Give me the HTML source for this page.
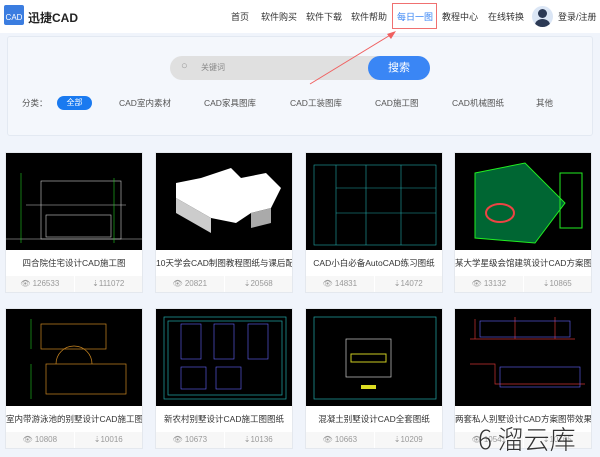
<!DOCTYPE html><html><head><meta charset="utf-8"><style>
*{margin:0;padding:0;box-sizing:border-box}
body{width:600px;height:456px;overflow:hidden;background:#f0f4fb;font-family:"Liberation Sans","Noto Sans CJK SC",sans-serif;position:relative;color:#333}
.hdr{position:absolute;left:0;top:0;width:600px;height:33px;background:#fff}
.logo{position:absolute;left:4px;top:5px;width:20px;height:20px;background:#3b7de0;border-radius:2px;color:#fff;font-size:8px;line-height:26px;text-align:center}
.brand{position:absolute;left:28px;top:9px;font-size:12px;font-weight:bold;color:#222}
.nav{position:absolute;top:10px;font-size:9px;color:#333}
.panel{position:absolute;left:7px;top:36px;width:586px;height:100px;background:#f4f7fc;border:1px solid #e3e9f2;border-radius:3px}
.search{position:absolute;left:170px;top:56px;width:260px;height:24px;background:#e0e0e0;border-radius:12px}
.btn{position:absolute;left:368px;top:56px;width:62px;height:24px;background:#3a86f5;border-radius:12px;color:#fff;font-size:11px;text-align:center;line-height:24px}
.cat{position:absolute;top:97px;font-size:8.5px;color:#555}
.card{position:absolute;width:138px;background:#fff;border:1px solid #e4e8ee}
.img{height:97px;background:#000;position:relative;overflow:hidden}
.t{height:26px;font-size:8.5px;text-align:center;line-height:26px;color:#333;white-space:nowrap;overflow:hidden}
.s{height:16px;background:#f7f7f7;display:flex;font-size:8px;color:#999;line-height:16px}
.s div{flex:1;text-align:center}.s div:first-child{border-right:1px solid #fff}
</style></head><body>
<div class="hdr"></div>
<div class="logo">CAD</div><div class="brand">迅捷CAD</div>
<div class="nav" style="left:231px">首页</div>
<div class="nav" style="left:261px">软件购买</div>
<div class="nav" style="left:306px">软件下载</div>
<div class="nav" style="left:351px">软件帮助</div>
<div class="nav" style="left:397px;color:#3a86f5">每日一图</div>
<div style="position:absolute;left:392px;top:3px;width:45px;height:26px;border:1px solid #f07070"></div>
<div class="nav" style="left:442px">教程中心</div>
<div class="nav" style="left:488px">在线转换</div>
<div style="position:absolute;left:532px;top:6px;width:21px;height:21px;border-radius:50%;background:#dbe6f5;overflow:hidden"><div style="position:absolute;left:6px;top:3px;width:9px;height:9px;border-radius:50%;background:#2c3a55"></div><div style="position:absolute;left:3px;top:13px;width:15px;height:12px;border-radius:50%;background:#2c3a55"></div></div>
<div class="nav" style="left:558px">登录/注册</div>
<div class="panel"></div>
<div class="search"><span style="position:absolute;left:11px;top:4px;font-size:11px;color:#999">○</span><span style="position:absolute;left:31px;top:6px;font-size:8px;color:#888">关键词</span></div>
<div class="btn">搜索</div>
<svg style="position:absolute;left:0;top:0" width="600" height="100"><line x1="310" y1="84" x2="392" y2="34" stroke="#f06060" stroke-width="1"/><polygon points="396,31 387,34 391,39" fill="#f06060"/></svg>
<div class="cat" style="left:22px">分类：</div>
<div style="position:absolute;left:57px;top:96px;width:35px;height:14px;background:#1a7af0;border-radius:7px;color:#fff;font-size:8px;text-align:center;line-height:14px">全部</div>
<div class="cat" style="left:119px">CAD室内素材</div>
<div class="cat" style="left:204px">CAD家具图库</div>
<div class="cat" style="left:290px">CAD工装图库</div>
<div class="cat" style="left:375px">CAD施工图</div>
<div class="cat" style="left:452px">CAD机械图纸</div>
<div class="cat" style="left:536px">其他</div>

<div class="card" style="left:5px;top:152px"><div class="img"><svg width="138" height="97"><g stroke="#ccc" fill="none" stroke-width=".6"><rect x="35" y="28" width="80" height="58"/><line x1="20" y1="52" x2="120" y2="52"/><line x1="0" y1="86" x2="138" y2="86"/><rect x="40" y="62" width="65" height="22"/></g><g stroke="#2c2" stroke-width=".6"><line x1="15" y1="20" x2="15" y2="90"/><line x1="108" y1="25" x2="108" y2="90"/></g></svg></div><div class="t">四合院住宅设计CAD施工图</div><div class="s"><div>👁 126533</div><div>⇣111072</div></div></div>
<div class="card" style="left:155px;top:152px"><div class="img"><svg width="138" height="97"><polygon points="45,25 75,15 85,25 110,20 125,35 115,55 95,60 80,70 55,65 20,45 20,30" fill="#fff"/><polygon points="20,45 55,65 55,80 20,60" fill="#ccc"/><polygon points="95,60 115,55 115,70 95,75" fill="#aaa"/></svg></div><div class="t">10天学会CAD制图教程图纸与课后配套...</div><div class="s"><div>👁 20821</div><div>⇣20568</div></div></div>
<div class="card" style="left:305px;top:152px"><div class="img"><svg width="138" height="97"><g stroke="#2aa" fill="none" stroke-width=".6"><rect x="8" y="12" width="122" height="80"/><line x1="30" y1="12" x2="30" y2="92"/><line x1="60" y1="12" x2="60" y2="92"/><line x1="95" y1="12" x2="95" y2="92"/><line x1="30" y1="35" x2="130" y2="35"/><line x1="30" y1="60" x2="130" y2="60"/></g></svg></div><div class="t">CAD小白必备AutoCAD练习图纸</div><div class="s"><div>👁 14831</div><div>⇣14072</div></div></div>
<div class="card" style="left:454px;top:152px"><div class="img"><svg width="138" height="97"><polygon points="20,20 70,10 110,50 80,90 20,85" fill="#063" stroke="#2e2"/><ellipse cx="45" cy="60" rx="14" ry="9" fill="none" stroke="#e44" stroke-width="2"/><rect x="105" y="20" width="22" height="55" fill="none" stroke="#2e2"/></svg></div><div class="t">某大学星级会馆建筑设计CAD方案图</div><div class="s"><div>👁 13132</div><div>⇣10865</div></div></div>

<div class="card" style="left:5px;top:308px"><div class="img"><svg width="138" height="97"><g stroke="#c82" fill="none" stroke-width=".7"><rect x="35" y="15" width="65" height="25"/><rect x="40" y="55" width="80" height="30"/><path d="M50 55 A18 18 0 0 1 86 55"/></g><g stroke="#2c2" stroke-width=".6"><line x1="25" y1="10" x2="25" y2="40"/><line x1="25" y1="55" x2="25" y2="90"/></g></svg></div><div class="t">室内带游泳池的别墅设计CAD施工图方案</div><div class="s"><div>👁 10808</div><div>⇣10016</div></div></div>
<div class="card" style="left:155px;top:308px"><div class="img"><svg width="138" height="97"><g stroke="#2aa" fill="none" stroke-width=".7"><rect x="8" y="8" width="122" height="82"/><rect x="12" y="12" width="114" height="74"/></g><g stroke="#66f" fill="none" stroke-width=".6"><rect x="25" y="15" width="20" height="35"/><rect x="58" y="15" width="20" height="35"/><rect x="92" y="15" width="20" height="35"/><rect x="25" y="58" width="25" height="22"/><rect x="60" y="58" width="25" height="22"/></g></svg></div><div class="t">新农村别墅设计CAD施工图图纸</div><div class="s"><div>👁 10673</div><div>⇣10136</div></div></div>
<div class="card" style="left:305px;top:308px"><div class="img"><svg width="138" height="97"><rect x="8" y="8" width="122" height="82" fill="none" stroke="#2aa" stroke-width=".7"/><rect x="40" y="30" width="45" height="38" fill="none" stroke="#ccc" stroke-width=".7"/><rect x="45" y="45" width="35" height="8" fill="none" stroke="#cc2"/><rect x="55" y="76" width="15" height="4" fill="#dd2"/></svg></div><div class="t">混凝土别墅设计CAD全套图纸</div><div class="s"><div>👁 10663</div><div>⇣10209</div></div></div>
<div class="card" style="left:454px;top:308px"><div class="img"><svg width="138" height="97"><g stroke="#c33" fill="none" stroke-width=".7"><path d="M15 30 L120 30 M20 10 L20 30 M60 8 L60 30 M100 8 L100 30"/><path d="M15 55 L40 55 L40 75 L130 75"/></g><g stroke="#66f" fill="none" stroke-width=".6"><rect x="25" y="12" width="90" height="16"/><rect x="45" y="58" width="80" height="20"/></g></svg></div><div class="t">两套私人别墅设计CAD方案图带效果图</div><div class="s"><div>👁 10541</div><div>⇣10765</div></div></div>
<div style="position:absolute;left:478px;top:424px;font-size:26px;color:#333;font-family:'Noto Sans CJK SC',sans-serif;font-weight:300;line-height:30px;text-shadow:0 0 2px #fff">6 溜云库</div>
</body></html>
